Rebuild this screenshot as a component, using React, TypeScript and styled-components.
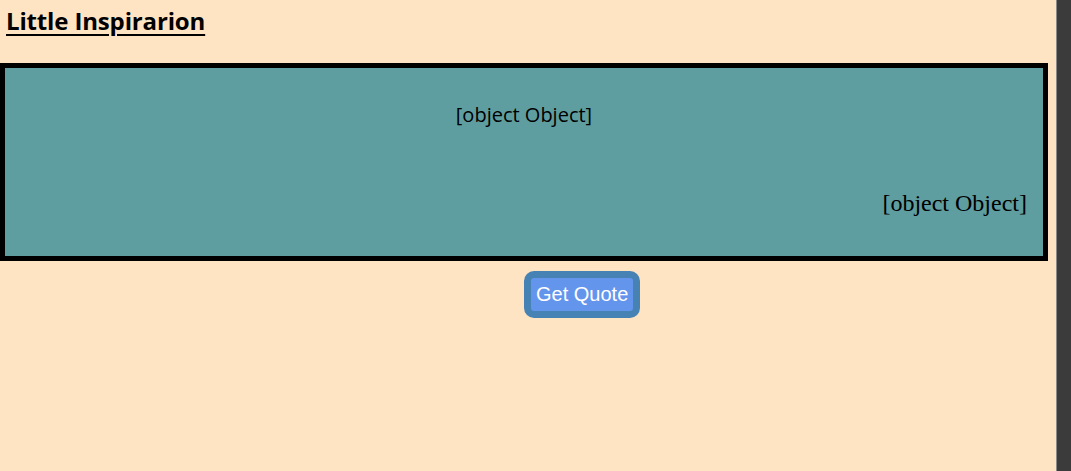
import styled, { createGlobalStyle } from 'styled-components';

const GlobalStyle = createGlobalStyle`
  html, body {
    margin: 0;
    padding: 0;
    height: 100%;
    overflow: hidden;
  }
  body {
    background: #ffe4c4;
  }
  #root {
    height: 100%;
  }
`;

const Frame = styled.div`
  display: flex;
  height: 100%;
`;

const Page = styled.main`
  flex: 1;
  min-width: 0;
  background: #ffe4c4;
`;

const Scrollbar = styled.aside`
  width: 14px;
  flex: none;
  background: #3b3b3b;
  border-left: 1px solid #8a8a8a;
`;

const Title = styled.h1`
  margin: 0;
  padding: 5px 0 0 6px;
  height: 58px;
  box-sizing: border-box;
  font-family: 'Open Sans', 'Noto Sans', sans-serif;
  font-size: 24px;
  line-height: 32px;
  font-weight: 700;
  letter-spacing: -0.15px;
  color: #000;
  text-decoration: underline;
  text-underline-offset: 4px;
  text-decoration-thickness: 2px;
`;

const Quote = styled.section`
  margin: 5px 8px 0 0;
  border: 5px solid #000;
  background: #5f9ea0;
  height: 198px;
  box-sizing: border-box;
  display: flex;
  flex-direction: column;
`;

const QuoteText = styled.p`
  margin: 34px 0 0;
  text-align: center;
  font-family: 'Open Sans', 'Noto Sans', sans-serif;
  font-size: 20px;
  line-height: 26px;
  color: #000;
`;

const Author = styled.p`
  margin: 62px 16px 0 0;
  text-align: right;
  font-family: 'Liberation Serif', 'Times New Roman', serif;
  font-size: 24px;
  line-height: 27px;
  color: #000;
`;

const Actions = styled.div`
  padding: 10px 0 0 calc(50% - 4px);
`;

const QuoteButton = styled.button`
  display: block;
  margin: 0;
  padding: 5px;
  border: 7px solid #4682b4;
  border-radius: 10px;
  background: #6495ed;
  color: #fff;
  font-family: 'Liberation Sans', Arial, sans-serif;
  font-size: 20px;
  line-height: 23px;
  cursor: pointer;
`;

export default function App() {
  return (
    <>
      <GlobalStyle />
      <Frame>
        <Page>
          <Title>Little Inspirarion</Title>
          <Quote>
            <QuoteText>[object Object]</QuoteText>
            <Author>[object Object]</Author>
          </Quote>
          <Actions>
            <QuoteButton>Get Quote</QuoteButton>
          </Actions>
        </Page>
        <Scrollbar />
      </Frame>
    </>
  );
}
